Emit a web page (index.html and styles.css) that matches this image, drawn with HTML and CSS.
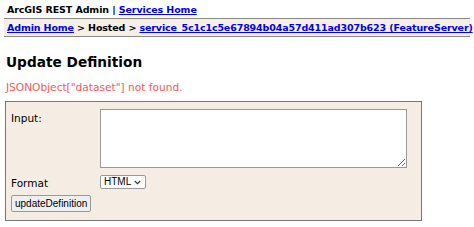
FILE: index.html
```html
<!DOCTYPE html>
<html lang="en">
<head>
  <meta charset="UTF-8">
  <title>ArcGIS REST Admin</title>
  <link rel="stylesheet" href="styles.css">
</head>
<body>

  <!-- header -->
  <div class="userTable">ArcGIS REST Admin | <a href="#">Services Home</a></div>
  <div class="navTable">
    <a href="#">Admin Home</a> &gt; Hosted &gt; <a href="#">service_5c1c1c5e67894b04a57d411ad307b623 (FeatureServer)</a>
  </div>

  <div class="restBody">
    <h2>Update Definition</h2>
    <div class="error">JSONObject["dataset"] not found.</div>

    <form class="formTable">
      <div class="row">
        <label class="lbl">Input:</label>
        <textarea class="input"></textarea>
      </div>
      <div class="row fmt">
        <label class="lbl">Format</label>
        <span class="selectWrap">
          <select class="select"><option>HTML</option></select>
          <svg class="chev" width="7" height="5" viewBox="0 0 7 5"><path d="M0.8 1 L3.5 3.7 L6.2 1" fill="none" stroke="#333" stroke-width="1.2"/></svg>
        </span>
      </div>
      <button type="button" class="submit">updateDefinition</button>
    </form>
  </div>

</body>
</html>
```

FILE: styles.css
```css
* {
  box-sizing: border-box;
}

body {
  margin: 0;
  padding: 2px 4px 0;
  font-family: 'DejaVu Sans', Verdana, sans-serif;
  font-size: 10.5px;
  background-color: #fff;
  color: #000;
}

a {
  color: #0000ee;
}

.userTable {
  font-weight: bold;
  font-size: 9.5px;
  letter-spacing: -0.1px;
  padding: 2px 3px 3px;
  height: 17px;
  border-bottom: 1px solid #888;
}

.navTable {
  font-weight: bold;
  font-size: 9.5px;
  letter-spacing: -0.13px;
  white-space: nowrap;
  padding: 3px 3px 2px;
  height: 18px;
  background-color: #f5efe6;
  border-bottom: 1px solid #888;
}

.restBody {
  padding: 0 1px;
}

h2 {
  font-size: 13.7px;
  margin: 17px 1px 11px;
}

.error {
  color: #f05a5a;
  font-size: 10.6px;
  margin: 0 1px 8px;
}

.formTable {
  width: 417px;
  background-color: #f5ede4;
  border: 1px solid #777;
  padding: 7px 5px 8px 5px;
}

.row {
  display: flex;
  align-items: flex-start;
}

.lbl {
  width: 89px;
  padding-top: 3px;
}

.input {
  width: 307px;
  height: 59px;
  margin: 0;
  border: 1px solid #999;
  resize: both;
}

.fmt {
  align-items: center;
  margin-top: 6px;
}

.selectWrap {
  position: relative;
  display: inline-block;
}

.select {
  appearance: none;
  font-family: 'Liberation Sans', Arial, sans-serif;
  font-size: 10px;
  width: 46px;
  height: 14px;
  padding: 0 0 0 3px;
  border: 1px solid #999;
  border-radius: 2px;
  background-color: #fff;
  color: #000;
}

.chev {
  position: absolute;
  right: 5px;
  top: 5px;
  pointer-events: none;
}

.submit {
  margin-top: 6px;
  font-family: 'Liberation Sans', Arial, sans-serif;
  font-size: 10px;
  padding: 2px 3px;
  height: 17px;
  border: 1px solid #999;
  border-radius: 2px;
  background-color: #efefef;
}
```
